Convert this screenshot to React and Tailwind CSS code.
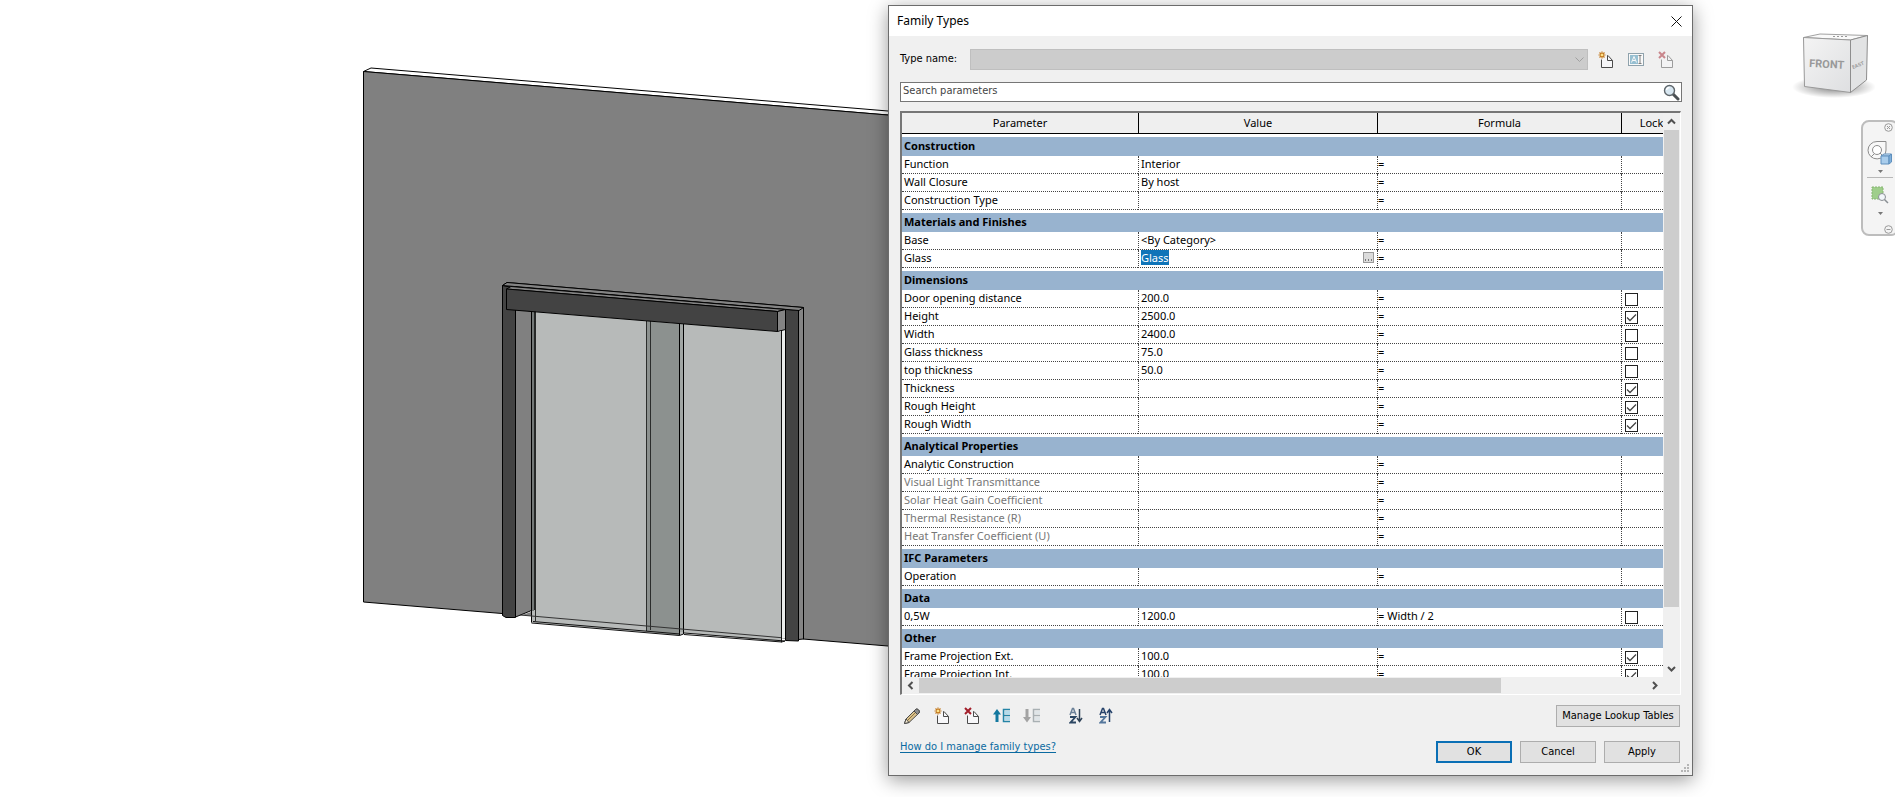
import React from "react";

const sections = [
  {
    title: "Construction",
    rows: [
      { name: "Function", value: "Interior" },
      { name: "Wall Closure", value: "By host" },
      { name: "Construction Type" },
    ],
  },
  {
    title: "Materials and Finishes",
    rows: [
      { name: "Base", value: "<By Category>" },
      { name: "Glass", value: "Glass", editing: true },
    ],
  },
  {
    title: "Dimensions",
    rows: [
      { name: "Door opening distance", value: "200.0", lock: false },
      { name: "Height", value: "2500.0", lock: true },
      { name: "Width", value: "2400.0", lock: false },
      { name: "Glass thickness", value: "75.0", lock: false },
      { name: "top thickness", value: "50.0", lock: false },
      { name: "Thickness", lock: true },
      { name: "Rough Height", lock: true },
      { name: "Rough Width", lock: true },
    ],
  },
  {
    title: "Analytical Properties",
    rows: [
      { name: "Analytic Construction" },
      { name: "Visual Light Transmittance", muted: true },
      { name: "Solar Heat Gain Coefficient", muted: true },
      { name: "Thermal Resistance (R)", muted: true },
      { name: "Heat Transfer Coefficient (U)", muted: true },
    ],
  },
  { title: "IFC Parameters", rows: [{ name: "Operation" }] },
  { title: "Data", rows: [{ name: "0,5W", value: "1200.0", formula: "Width / 2", lock: false }] },
  {
    title: "Other",
    rows: [
      { name: "Frame Projection Ext.", value: "100.0", lock: true },
      { name: "Frame Projection Int.", value: "100.0", lock: true },
    ],
  },
];

function ModelView() {
  return (
    <svg className="absolute left-0 top-0" width="900" height="797" viewBox="0 0 900 797" aria-label="3D view of a wall with a sliding door">
      <polygon points="363.5,71.5 371,68 900,112 900,116" fill="#fff" stroke="#000" />
      <polygon points="363.5,71.5 900,116 900,647 803,639 502,613.5 363.5,602" fill="#808080" />
      <path d="M363.5 71.5V602L502 613.5M803 639L900 647M363.5 71.5L900 116" fill="none" stroke="#000" />
      {/* opening */}
      <polygon points="516,309 785,330 785,640 532,623 531,610 516,617" fill="#fff" />
      <polygon points="502.5,285.5 507,282.5 803.5,307.5 803.5,639 798.5,639.5 798.5,310" fill="#848484" stroke="#000" />
      <polygon points="516,300 785,320 785,641 684,635 532,622 531,612 516,617" fill="#fff" />
      {/* left jamb */}
      <polygon points="515.5,309 531.5,311 531.5,610.5 515.5,617" fill="#808080" stroke="#000" />
      <polygon points="502.5,285.5 510,287 515.5,309 515.5,617.5 506,617.5 502.5,615.5" fill="#434343" stroke="#000" />
      {/* glass panels */}
      <polygon points="531.5,311 683.5,324 683.5,634.5 679.5,635.5 531.5,622.5" fill="#b7bab9" />
      <polygon points="646.5,321 782,332 782,642 646.5,629.5" fill="#b7bab9" />
      <polygon points="646.5,321 679.5,324 679.5,635.5 646.5,631.5" fill="#8c918f" />
      <rect x="680" y="324" width="3" height="308" fill="#a1a6a4" />
      <rect x="532" y="311" width="2" height="300" fill="#737877" />
      <rect x="534" y="311" width="2" height="299" fill="#262827" />
      <path d="M535.5 610V621M646.5 321V631M650.5 321V630" stroke="#2b2d2c" fill="none" />
      <path d="M531.5 311V622.5M679.5 324V635.5M683.5 324V634" stroke="#000" fill="none" />
      <path d="M531.5 623L679.5 635.5L683.5 634M533 621.5L680 634M684 634.5L782 642M684 633L785 641" fill="none" stroke="#111" />
      <path d="M520 615L785 638" stroke="#333" fill="none" />
      <rect x="782" y="329" width="3" height="309" fill="#eceeed" />
      <path d="M781.5 330V642L785 641" stroke="#111" fill="none" />
      {/* right jamb */}
      <polygon points="785.5,309.5 798.5,310 798.5,641 785.5,640.5" fill="#434343" stroke="#000" />
      {/* header */}
      <polygon points="502.5,285.5 507,282.5 803.5,307.5 799,310.5" fill="#848484" stroke="#000" />
      <polygon points="506.5,289 511,286.5 785.5,309.5 777.5,311.5" fill="#848484" stroke="#000" />
      <polygon points="777.5,311.5 785.5,309.5 785.5,329.5 777.5,331.5" fill="#848484" stroke="#000" />
      <polygon points="506.5,289 777.5,311.5 777.5,331.5 506.5,309.5" fill="#434343" stroke="#000" />
    </svg>
  );
}

function ViewCube() {
  return (
    <svg className="absolute right-5 top-7" width="90" height="76" viewBox="1785 28 90 76" aria-label="View cube">
      <defs>
        <radialGradient id="cubeShadow">
          <stop offset="0" stopColor="#000" stopOpacity=".5" />
          <stop offset="1" stopColor="#000" stopOpacity="0" />
        </radialGradient>
        <linearGradient id="cubeFront" x1="0" y1="0" x2="1" y2="1">
          <stop offset="0" stopColor="#f4f4f4" />
          <stop offset="1" stopColor="#dedfe1" />
        </linearGradient>
      </defs>
      <ellipse cx="1834" cy="87" rx="42" ry="11" fill="url(#cubeShadow)" />
      <polygon points="1803.5,37.5 1820,34 1867.5,35.5 1850.5,40" fill="#fafafa" stroke="#a2a2a2" />
      <path d="M1833 36.5H1848" stroke="#999" strokeDasharray="2 2" />
      <polygon points="1803.5,37.5 1850.5,40 1850.5,92.5 1804.5,86.5" fill="url(#cubeFront)" stroke="#999" />
      <polygon points="1850.5,40 1867.5,35.5 1866.5,80 1850.5,92.5" fill="#e2e3e4" stroke="#8e8e8e" />
      <text x="1809" y="67" transform="rotate(3 1809 67)" fontFamily="Roboto, sans-serif" fontWeight="700" fontSize="11" fill="#999">FRONT</text>
      <text x="1853" y="69" transform="rotate(-22 1853 69)" fontFamily="Roboto, sans-serif" fontWeight="700" fontSize="5" fill="#999">EAST</text>
    </svg>
  );
}

function NavigationBar() {
  return (
    <nav aria-label="Navigation" className="absolute -right-1 top-[120px] flex w-[38px] flex-col items-center rounded-lg border-2 border-[#bdbdbd] bg-[#f4f4f4] pt-px">
      <button aria-label="Close" className="self-end pr-1">
        <svg width="9" height="9" viewBox="0 0 9 9" fill="none" stroke="#9a9a9a"><circle cx="4.5" cy="4.5" r="3.8" /><path d="M3 3l3 3M6 3l-3 3" /></svg>
      </button>
      <button aria-label="Steering wheel" className="mt-2">
        <svg width="26" height="26" viewBox="0 0 26 26" fill="none">
          <path d="M10 1.5h9v8.5a9 8.7 0 1 1-9-8.5z" fill="#f8f8f8" stroke="#8d8d8d" />
          <circle cx="10" cy="10" r="4.5" fill="#fff" stroke="#8d8d8d" />
          <path d="M4 17l3-3M13 13l3 3" stroke="#8d8d8d" />
          <path d="M14 16l3-2h7l-2 2z" fill="#d6eafa" stroke="#5e8fbd" />
          <path d="M14 16h8v8h-8z" fill="#a9cdec" stroke="#5e8fbd" />
          <path d="M22 16l2.500-2v8L22 24z" fill="#7fb0dc" stroke="#5e8fbd" />
        </svg>
      </button>
      <button aria-label="Steering wheel options" className="mt-1"><svg width="5" height="3" viewBox="0 0 5 3"><path d="M0 0h5L2.500 3z" fill="#777" /></svg></button>
      <hr className="mt-1 w-[26px] border-[#b8b8b8]" />
      <button aria-label="Zoom in region" className="mt-2">
        <svg width="18" height="18" viewBox="0 0 18 18" fill="none">
          <rect x="1" y="1" width="11" height="12" fill="#9fce8b" stroke="#86b573" strokeDasharray="2 1" />
          <circle cx="11" cy="11" r="3.500" fill="#f2f6fa" stroke="#8a8f94" />
          <path d="M13.500 13.500L17 17" stroke="#8a8f94" strokeWidth="1.500" />
        </svg>
      </button>
      <button aria-label="Zoom options" className="mt-2"><svg width="5" height="3" viewBox="0 0 5 3"><path d="M0 0h5L2.500 3z" fill="#777" /></svg></button>
      <button aria-label="Customize" className="mt-2.5 self-end pr-1">
        <svg width="9" height="9" viewBox="0 0 9 9" fill="none" stroke="#9a9a9a"><circle cx="4.500" cy="4.500" r="3.800" /><path d="M2.500 4.500h4" /></svg>
      </button>
    </nav>
  );
}

function PageIcon({ kind, faded }) {
  return (
    <svg className={faded ? "opacity-50" : ""} width="16" height="18" viewBox="0 0 16 18" fill="none">
      <path d="M3.500 7.500H6.500V5.500H10L14.500 9.500V16.500H3.500z" fill="#f7f7f9" />
      <path d="M3.500 8.500V16.500H14.500V9.500L10 4.500H9.500V9.500H14.500" stroke="#4b4b4b" />
      {kind === "new" ? (
        <g stroke="#c47a1e" strokeWidth="1.200">
          <path d="M4 0.500v7M.5 4h7M1.500 1.500l5 5M6.500 1.500l-5 5" />
          <circle cx="4" cy="4" r="1.200" fill="#ffe58a" stroke="none" />
        </g>
      ) : (
        <path d="M1 1l6 6M7 1L1 7" stroke="#a31f2b" strokeWidth="2" />
      )}
    </svg>
  );
}

function RenameIcon() {
  return (
    <svg className="opacity-60" width="16" height="14" viewBox="0 0 16 14" fill="none">
      <rect x=".5" y=".5" width="15" height="12" fill="#fff" stroke="#4f6f80" />
      <rect x="2" y="2" width="8" height="9" fill="#5b9fbe" />
      <path d="M3.500 9.500L6 3.500l2.500 6M4.500 7.500h3" stroke="#fff" />
      <path d="M10.500 2.500h3M12 2.500v8M10.500 10.500h3" stroke="#333" />
    </svg>
  );
}

function PencilIcon() {
  return (
    <svg width="18" height="18" viewBox="0 0 18 18">
      <path d="M1.500 16.500L3 12 12.500 2.500C14 1 17.500 3.500 16 6L6 15.500z" fill="#d9c08b" stroke="#4a4a4a" />
      <path d="M4.500 13.500L13.500 4.500" stroke="#8b7342" />
      <path d="M12.500 2.500C14 1 17.500 3.500 16 6l-1.500 1.500-3.500-3.500z" fill="#8d8d8d" stroke="#4a4a4a" />
      <path d="M1.500 16.500L3 12l3 3.500z" fill="#f6ecd4" stroke="#4a4a4a" />
    </svg>
  );
}

function MoveIcon({ down }) {
  return (
    <svg width="18" height="16" viewBox="0 0 18 16" fill="none">
      {down ? (
        <path d="M2.500 1h3v8H8l-4 5.500L0 9h2.500z" fill="#a3a3a3" />
      ) : (
        <path d="M4 1l4 5.500H5.500V14h-3V6.500H0z" fill="#13789f" />
      )}
      <path d="M11.500 4.500H17M11.500 10.500H17" stroke={down ? "#dfe5e8" : "#b4dcec"} strokeWidth="3" />
      <path d="M17 1.500H10.500V13.500H17M10.500 7.500H17" stroke={down ? "#a9b0b3" : "#2584a6"} strokeWidth="1.500" />
    </svg>
  );
}

function SortIcon({ up }) {
  return (
    <svg width="14" height="18" viewBox="0 0 14 18" fill="none">
      <path d="M1 8L3.500 1.500h1L7 8M2 5.500h4" stroke={up ? "#27436b" : "#6b8198"} strokeWidth="1.500" />
      <path d="M1 10h5.500L1.500 15.500H7" stroke={up ? "#55779c" : "#2c4763"} strokeWidth="1.800" />
      {up ? (
        <path d="M10.500 15V3M8 6l2.500-3.500L13 6" stroke="#27436b" strokeWidth="1.500" />
      ) : (
        <path d="M10.500 2v12M8 11l2.500 3.500L13 11" stroke="#2f4358" strokeWidth="1.500" />
      )}
    </svg>
  );
}

function Chevron({ path }) {
  return (
    <svg width="9" height="9" viewBox="0 0 9 9" fill="none" stroke="#505050" strokeWidth="2">
      <path d={path} />
    </svg>
  );
}

function LockBox({ name, checked }) {
  return (
    <span className="grid h-[13px] w-[13px]">
      <input type="checkbox" aria-label={"Lock " + name} defaultChecked={checked} className="peer col-start-1 row-start-1 m-0 h-[13px] w-[13px] appearance-none border border-[#222] bg-white" />
      <svg className="pointer-events-none invisible col-start-1 row-start-1 peer-checked:visible" width="13" height="13" viewBox="0 0 13 13" fill="none" stroke="#444">
        <path d="M2 6.500L5 9.500L11 3.500" strokeWidth="1.300" />
      </svg>
    </span>
  );
}

function ParameterTable() {
  const head = "h-[21px] border-b border-black bg-[#efefef] p-0 pb-0.5 text-center font-normal";
  const cell = "border-b border-dotted border-[#444] p-0 align-top";
  return (
    <table className="w-[779px] table-fixed border-separate border-spacing-0 text-[11px] leading-[15px]">
      <colgroup>
        <col className="w-[236px]" />
        <col className="w-[239px]" />
        <col className="w-[244px]" />
        <col className="w-[60px]" />
      </colgroup>
      <thead>
        <tr>
          <th className={head}>Parameter</th>
          <th className={head + " border-l"}>Value</th>
          <th className={head + " border-l"}>Formula</th>
          <th className={head + " border-l"}>Lock</th>
        </tr>
      </thead>
      {sections.map((s) => (
        <tbody key={s.title}>
          <tr>
            <th colSpan={4} scope="colgroup" className="h-[22px] border-t-[3px] border-white bg-[#98b3cf] p-0 pb-0.5 pl-0.5 text-left font-bold">{s.title}</th>
          </tr>
          {s.rows.map((r) => (
            <tr key={r.name} className="h-[18px]">
              <td className={cell + " pl-0.5 " + (r.muted ? "text-[#777]" : "text-black")}>{r.name}</td>
              <td className={cell + " border-l pl-0.5"}>
                {r.editing ? (
                  <div className="flex h-[17px] items-start justify-between pr-[3px]">
                    <input aria-label={r.name} defaultValue={r.value} className="h-[15px] w-7 bg-[#0f74b8] text-white outline-none" />
                    <button aria-label="Browse materials" className="mt-0.5 flex h-[11px] w-[11px] items-end justify-center border border-[#999] bg-[#dcdcdc]">
                      <svg width="7" height="3" viewBox="0 0 7 3"><path d="M0 1h1M3 1h1M6 1h1" stroke="#111" /></svg>
                    </button>
                  </div>
                ) : r.value}
              </td>
              <td className={cell + " border-l"}>= {r.formula}</td>
              <td className={cell + " border-l pl-[3px]"}>
                {r.lock !== undefined && <div className="flex h-[17px] items-end pb-px"><LockBox name={r.name} checked={r.lock} /></div>}
              </td>
            </tr>
          ))}
        </tbody>
      ))}
    </table>
  );
}

const ui = "font-['DejaVu_Sans_Condensed',sans-serif] text-[11px]";

function DialogButton({ children, primary, wide }) {
  return (
    <button className={"h-[22px] bg-[#e1e1e1] text-black " + ui + (primary ? " border-2 border-[#0a6fb5]" : " border border-[#adadad]") + (wide ? " w-[124px]" : " w-[76px]")}>
      {children}
    </button>
  );
}

function FamilyTypesDialog() {
  return (
    <section role="dialog" aria-labelledby="dialog-title" className="absolute right-[202px] top-[5px] w-[805px] border border-[#6c6c6c] bg-[#f0f0f0] pb-3 shadow-[0_4px_18px_rgba(0,0,0,0.4)]">
      <header className="flex h-[30px] items-center justify-between bg-white pl-2 pr-2.5">
        <h1 id="dialog-title" className="text-xs">Family Types</h1>
        <button aria-label="Close">
          <svg width="11" height="11" viewBox="0 0 11 11" stroke="#111" fill="none"><path d="M.5.5l10 10M10.500.5l-10 10" /></svg>
        </button>
      </header>

      <div className="pl-[11px] pr-2.5">
        <div className={"flex items-center pt-[13px] " + ui}>
          <label htmlFor="type-name" className="w-[70px]">Type name:</label>
          <div className="relative flex-1">
            <select id="type-name" disabled className="block h-[21px] w-full appearance-none border border-[#bfbfbf] bg-[#cccccc]"><option></option></select>
            <svg className="pointer-events-none absolute right-1 top-2" width="9" height="6" viewBox="0 0 9 6" fill="none" stroke="#a0a0a0"><path d="M.5.5l4 4 4-4" /></svg>
          </div>
          <div className="flex w-[94px] items-center justify-between pl-2.5 pr-2">
            <button aria-label="New type"><PageIcon kind="new" /></button>
            <button aria-label="Rename type"><RenameIcon /></button>
            <button aria-label="Delete type"><PageIcon kind="delete" faded /></button>
          </div>
        </div>

        <div className="mt-3 flex h-5 items-center border border-[#767676] bg-white pl-0.5 pr-px">
          <input aria-label="Search parameters" placeholder="Search parameters" className={"h-4 flex-1 self-start outline-none placeholder:text-[#444] " + ui} />
          <button aria-label="Search">
            <svg width="17" height="17" viewBox="0 0 17 17" fill="none">
              <path d="M9.500 9.500L15 15" stroke="#4b5054" strokeWidth="3" strokeLinecap="round" />
              <circle cx="6.500" cy="6.500" r="5" fill="#d8e7f1" stroke="#5f666b" strokeWidth="1.400" />
              <path d="M3.500 6a3 3 0 0 1 3-2.500" stroke="#fff" strokeWidth="1.300" />
            </svg>
          </button>
        </div>

        <div className="mr-px mt-[9px] border-b border-l-2 border-r border-t-2 border-b-white border-l-[#767676] border-r-white border-t-[#767676]">
          <div className="flex h-[564px]">
            <div className="min-w-0 flex-1 overflow-hidden bg-white"><ParameterTable /></div>
            <div className="flex w-[17px] flex-col items-center bg-[#f0f0f0]">
              <button aria-label="Scroll up" className="flex h-[17px] shrink-0 items-center"><Chevron path="M1 6.500l3.500-3.500L8 6.500" /></button>
              <div className="h-[477px] w-[15px] bg-[#cdcdcd]" />
              <button aria-label="Scroll down" className="mt-auto flex h-[17px] items-center"><Chevron path="M1 3l3.500 3.500L8 3" /></button>
            </div>
          </div>
          <div className="flex h-[17px] items-center bg-[#f0f0f0] pr-[17px]">
            <button aria-label="Scroll left" className="flex w-[17px] justify-center"><Chevron path="M6.500 1L3 4.500L6.500 8" /></button>
            <div className="h-[15px] w-[582px] bg-[#cdcdcd]" />
            <button aria-label="Scroll right" className="ml-auto flex w-[17px] justify-center"><Chevron path="M3 1l3.500 3.500L3 8" /></button>
          </div>
        </div>

        <div className="mr-0.5 mt-[10px] flex h-[22px] items-center">
          <div className="flex items-center gap-3 pl-[3px]">
            <button aria-label="Edit parameter" className="flex w-[18px] justify-center"><PencilIcon /></button>
            <button aria-label="New parameter" className="flex w-[18px] justify-center"><PageIcon kind="new" /></button>
            <button aria-label="Delete parameter" className="flex w-[18px] justify-center"><PageIcon kind="delete" /></button>
            <button aria-label="Move up" className="flex w-[18px] justify-center"><MoveIcon /></button>
            <button aria-label="Move down" className="flex w-[18px] justify-center"><MoveIcon down /></button>
            <button aria-label="Sort ascending" className="ml-3.5 flex w-[18px] justify-center"><SortIcon /></button>
            <button aria-label="Sort descending" className="flex w-[18px] justify-center"><SortIcon up /></button>
          </div>
          <div className="ml-auto flex"><DialogButton wide>Manage Lookup Tables</DialogButton></div>
        </div>

        <div className="mr-0.5 mt-[14px] flex items-start justify-between">
          <a href="#help" className={"text-[#0a6aa1] underline underline-offset-2 leading-3 " + ui}>How do I manage family types?</a>
          <div className="flex gap-2">
            <DialogButton primary>OK</DialogButton>
            <DialogButton>Cancel</DialogButton>
            <DialogButton>Apply</DialogButton>
          </div>
        </div>
      </div>
      <svg className="absolute bottom-0.5 right-0.5" width="9" height="9" viewBox="0 0 9 9" fill="#b5b5b5">
        <path d="M6 0h2v2H6zM3 3h2v2H3zM6 3h2v2H6zM0 6h2v2H0zM3 6h2v2H3zM6 6h2v2H6z" />
      </svg>
    </section>
  );
}

export default function App() {
  return (
    <main className="relative min-h-screen overflow-hidden bg-white font-['Noto_Sans',sans-serif] text-black">
      <ModelView />
      <ViewCube />
      <NavigationBar />
      <FamilyTypesDialog />
    </main>
  );
}
